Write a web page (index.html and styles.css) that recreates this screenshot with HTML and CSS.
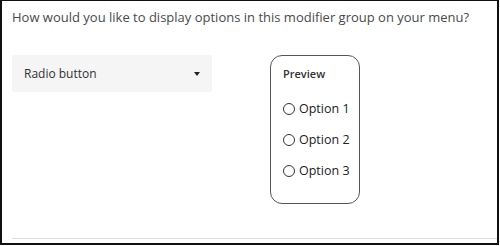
FILE: index.html
```html
<!DOCTYPE html>
<html>
<head>
    <title>Modifier Group Display</title>
    <link rel="stylesheet" href="styles.css">
</head>
<body>
    <div id="frame">
        <p class="question">How would you like to display options in this modifier group on your menu?</p>
        <div class="row">
            <div class="select">
                <span>Radio button</span>
                <span class="caret"></span>
            </div>
            <div class="preview">
                <div class="preview-title">Preview</div>
                <label class="option"><span class="radio"></span>Option 1</label>
                <label class="option"><span class="radio"></span>Option 2</label>
                <label class="option"><span class="radio"></span>Option 3</label>
            </div>
        </div>
        <div class="divider"></div>
    </div>
</body>
</html>
```

FILE: styles.css
```css
body {
    font-family: "Open Sans", Arial, sans-serif;
    background-color: #fff;
    margin: 0;
    padding: 0;
}

#frame {
    width: 485px;
    height: 242px;
    border: 2px solid #111;
    border-top-width: 1px;
    padding-left: 10px;
    display: flex;
    flex-direction: column;
}

.question {
    margin: 7px 0 0 0;
    font-size: 13px;
    line-height: 18px;
    color: #4a4a4a;
}

.row {
    display: flex;
    align-items: flex-start;
    margin-top: 29px;
}

.select {
    width: 200px;
    height: 37px;
    box-sizing: border-box;
    background-color: #f5f5f5;
    border-radius: 3px;
    padding: 0 11px 0 12px;
    display: flex;
    align-items: center;
    justify-content: space-between;
    font-size: 12px;
    color: #333;
}

.caret {
    width: 0;
    height: 0;
    border-left: 3.5px solid transparent;
    border-right: 3.5px solid transparent;
    border-top: 4px solid #222;
    margin-right: 1px;
}

.preview {
    margin-left: 58px;
    width: 90px;
    height: 149px;
    box-sizing: border-box;
    border: 1px solid #555;
    border-radius: 12px;
    padding: 10px 0 10px 12px;
}

.preview-title {
    font-size: 11px;
    line-height: 15px;
    font-weight: 600;
    color: #333;
    margin-bottom: 12px;
}

.option {
    display: flex;
    align-items: center;
    height: 31px;
    font-size: 12.5px;
    color: #222;
    white-space: nowrap;
}

.radio {
    width: 10px;
    height: 10px;
    border: 1px solid #333;
    border-radius: 50%;
    margin-right: 4px;
}

.divider {
    margin-top: auto;
    margin-bottom: 4px;
    height: 1px;
    background-color: #ddd;
}
```
